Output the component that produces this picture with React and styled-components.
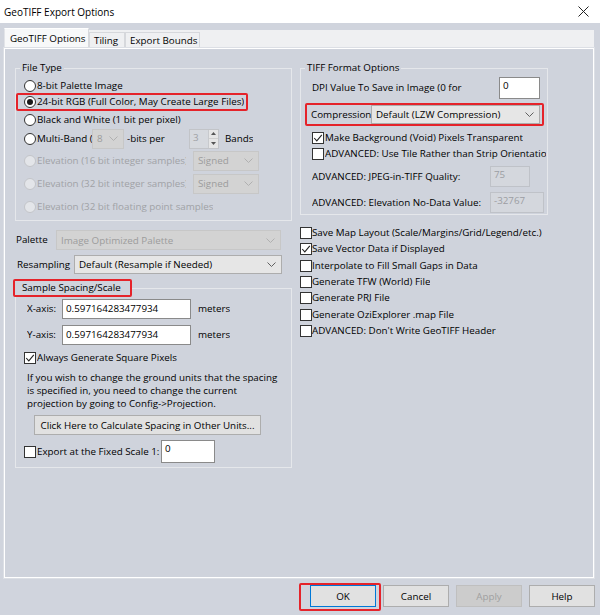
import React from 'react';
import styled, { createGlobalStyle, css } from 'styled-components';

const Global = createGlobalStyle`
  html, body { margin: 0; padding: 0; background: #d0d4dd; }
  body { font-family: "Open Sans", "Noto Sans", sans-serif; font-size: 9.8px; color: #000; }
  * { box-sizing: border-box; }
`;

const RED = '#e5232a';

const Window = styled.div`
  width: 600px;
  height: 615px;
  display: flex;
  flex-direction: column;
  background: #d0d4dd;
  overflow: hidden;
`;

const TitleBar = styled.div`
  height: 23px;
  flex-shrink: 0;
  background: #fff;
  display: flex;
  align-items: center;
  justify-content: space-between;
  padding: 0 11px 0 4px;
`;

const Title = styled.span`
  font-size: 10px;
  line-height: 14px;
`;

const Body = styled.div`
  flex: 1;
  display: flex;
  flex-direction: column;
  padding: 7px 6px 0 4px;
`;

const TabStrip = styled.div`
  height: 18px;
  flex-shrink: 0;
  background: #eff0f2;
  display: flex;
  align-items: flex-end;
`;

const Tab = styled.div`
  height: ${p => (p.$active ? 20 : 16)}px;
  width: ${p => p.$w}px;
  padding: 0 0 0 ${p => (p.$active ? 5 : 4)}px;
  display: flex;
  align-items: center;
  white-space: nowrap;
  background: ${p => (p.$active ? '#f7f8f9' : '#eff0f2')};
  border: 1px solid ${p => (p.$active ? '#ffffff' : '#d6d8dc')};
  border-bottom: none;
  ${p => p.$active && css`border-left-color: #e2e4e8; border-right-color: #d6d8dc;`}
`;

const Panel = styled.div`
  height: 530px;
  flex-shrink: 0;
  background: #cfd3dc;
  border: 1px solid #ffffff;
  box-shadow: 0 0 0 1px #dcdfe5;
  display: flex;
  gap: 8px;
  padding: 12px 0 0 10px;
`;

const Column = styled.div`
  width: ${p => p.$w}px;
  display: flex;
  flex-direction: column;
  flex-shrink: 0;
`;

const Group = styled.fieldset`
  margin: ${p => p.$mt || 0}px 0 0 0;
  min-width: 0;
  border: 1px solid #e5e7eb;
  padding: ${p => p.$pad};
`;

const Legend = styled.legend`
  margin-left: ${p => p.$ml}px;
  padding: 0 2px;
  line-height: 14px;
  white-space: nowrap;
  ${p => p.$mark && css`
    border: 2px solid ${RED};
    border-radius: 2px;
    padding: 0 9px 0 7px;
  `}
`;

const Stack = styled.div`
  display: flex;
  flex-direction: column;
`;

const Row = styled.div`
  display: flex;
  align-items: center;
  flex-shrink: 0;
  height: ${p => p.$h}px;
  margin-top: ${p => p.$mt || 0}px;
  margin-left: ${p => p.$ml || 0}px;
  margin-right: ${p => p.$mr || 0}px;
  justify-content: ${p => p.$between ? 'space-between' : 'flex-start'};
`;

const Mark = styled.div`
  display: flex;
  align-items: center;
  align-self: flex-start;
  flex-shrink: 0;
  border: 2px solid ${RED};
  border-radius: 2px;
  height: ${p => p.$h}px;
  margin-top: ${p => p.$mt || 0}px;
  margin-left: ${p => p.$ml}px;
  margin-right: ${p => p.$mr || 0}px;
  padding: 0 ${p => p.$pr || 2}px 0 ${p => p.$pl}px;
`;

const Label = styled.span`
  white-space: nowrap;
  overflow: hidden;
  line-height: 14px;
  flex-shrink: 0;
  color: ${p => (p.$disabled ? '#a0a2a6' : '#000')};
  ${p => p.$w && css`width: ${p.$w}px;`}
  margin-left: ${p => p.$ml || 0}px;
`;

const RadioCircle = styled.span`
  width: 12px;
  height: 12px;
  border-radius: 50%;
  flex-shrink: 0;
  margin-right: 1px;
  border: 1px solid ${p => (p.$disabled ? '#c3c5c9' : '#333')};
  background: ${p => (p.$disabled ? '#e3e5e9' : '#fff')};
  display: inline-flex;
  align-items: center;
  justify-content: center;
  &::after {
    content: '';
    width: 6px;
    height: 6px;
    border-radius: 50%;
    background: #1a1a1a;
    display: ${p => (p.$checked ? 'block' : 'none')};
  }
`;

const CheckBox = styled.span`
  width: 12px;
  height: 12px;
  flex-shrink: 0;
  margin-right: ${p => p.$gap ?? 1}px;
  border: 1px solid #333;
  background: #fff;
  display: inline-flex;
  align-items: center;
  justify-content: center;
`;

const Select = styled.div`
  width: ${p => p.$w}px;
  height: ${p => p.$h || 20}px;
  flex-shrink: 0;
  margin-left: ${p => p.$ml || 0}px;
  display: flex;
  align-items: center;
  justify-content: space-between;
  padding: 0 5px 0 4px;
  white-space: nowrap;
  background: ${p => (p.$disabled ? '#d3d3d3' : '#e6e6e6')};
  border: 1px solid ${p => (p.$disabled ? '#c7c7c7' : '#adadad')};
  color: ${p => (p.$disabled ? '#9c9c9c' : '#000')};
`;

const Field = styled.div`
  width: ${p => p.$w}px;
  height: ${p => p.$h || 20}px;
  flex-shrink: 0;
  margin-left: ${p => p.$ml || 0}px;
  display: flex;
  align-items: ${p => (p.$top ? 'flex-start' : 'center')};
  padding: ${p => (p.$top ? '1px 3px 0 3px' : '0 3px')};
  line-height: 14px;
  white-space: nowrap;
  background: ${p => (p.$disabled ? '#d4d7dd' : '#fff')};
  border: 1px solid ${p => (p.$disabled ? '#bfc2c8' : '#8a8a8a')};
  color: ${p => (p.$disabled ? '#9c9ea3' : '#000')};
`;

const Spin = styled.div`
  width: 30px;
  height: 20px;
  margin-left: ${p => p.$ml}px;
  flex-shrink: 0;
  display: flex;
  border: 1px solid #c2c4c8;
  background: #d6d9de;
`;

const SpinText = styled.div`
  flex: 1;
  padding: 1px 0 0 3px;
  line-height: 14px;
  color: #a0a2a6;
`;

const SpinArrows = styled.div`
  width: 10px;
  display: flex;
  flex-direction: column;
  border-left: 1px solid #c8cacd;
  background: #e6e6e6;
`;

const SpinArrow = styled.div`
  flex: 1;
  display: flex;
  align-items: center;
  justify-content: center;
  & + & { border-top: 1px solid #cfcfcf; }
`;

const Note = styled.p`
  margin: 6px 0 0 3px;
  line-height: 13px;
  white-space: nowrap;
`;

const WideButton = styled.button`
  font: inherit;
  color: #000;
  width: 227px;
  height: 20px;
  margin: 5px 0 0 10px;
  padding: 0;
  background: #e1e1e1;
  border: 1px solid #adadad;
  flex-shrink: 0;
`;

const CheckList = styled.div`
  display: flex;
  flex-direction: column;
  margin-top: 10px;
`;

const CheckItem = styled.div`
  height: 16.33px;
  display: flex;
  align-items: center;
  white-space: nowrap;
`;

const Footer = styled.div`
  display: flex;
  justify-content: flex-end;
  align-items: flex-start;
  gap: 7px;
  padding: 7px 0 0 0;
  margin-right: -1px;
`;

const DefaultMark = styled.div`
  display: flex;
  margin: -2px -5px 0 0;
  padding: 0 3px 2px 9px;
  border: 2px solid ${RED};
  border-radius: 2px;
`;

const PushButton = styled.button`
  font: inherit;
  width: 66px;
  height: 22px;
  padding: 0;
  background: #e1e1e1;
  border: 1px solid #adadad;
  color: #000;
  ${p => p.$default && css`border-color: #0078d7;`}
  ${p => p.$disabled && css`
    background: #cccccc;
    border-color: #bfbfbf;
    color: #a0a0a0;
  `}
`;

const Chevron = ({ disabled }) => (
  <svg width="9" height="5" viewBox="0 0 9 5">
    <polyline points="0.5,0.5 4.5,4.5 8.5,0.5" fill="none" stroke={disabled ? '#b0b0b0' : '#606060'} strokeWidth="1" />
  </svg>
);

const Tick = () => (
  <svg width="10" height="10" viewBox="0 0 10 10">
    <polyline points="1.2,5 3.8,7.8 8.8,1.8" fill="none" stroke="#222" strokeWidth="1.1" />
  </svg>
);

const Close = () => (
  <svg width="11" height="11" viewBox="0 0 11 11">
    <path d="M0.5 0.5 L10.5 10.5 M10.5 0.5 L0.5 10.5" stroke="#222" strokeWidth="1" />
  </svg>
);

const Radio = ({ checked, disabled, children, w }) => (
  <>
    <RadioCircle $checked={checked} $disabled={disabled} />
    <Label $disabled={disabled} $w={w}>{children}</Label>
  </>
);

const Check = ({ checked, children, gap, w }) => (
  <>
    <CheckBox $gap={gap}>{checked && <Tick />}</CheckBox>
    <Label $w={w}>{children}</Label>
  </>
);

const rightChecks = [
  ['Save Map Layout (Scale/Margins/Grid/Legend/etc.)', false],
  ['Save Vector Data if Displayed', true],
  ['Interpolate to Fill Small Gaps in Data', false],
  ['Generate TFW (World) File', false],
  ['Generate PRJ File', false],
  ['Generate OziExplorer .map File', false],
  ["ADVANCED: Don't Write GeoTIFF Header", false],
];

export default function App() {
  return (
    <>
      <Global />
      <Window>
        <TitleBar>
          <Title>GeoTIFF Export Options</Title>
          <Close />
        </TitleBar>
        <Body>
          <TabStrip>
            <Tab $active $w={85}>GeoTIFF Options</Tab>
            <Tab $w={36}>Tiling</Tab>
            <Tab $w={75}>Export Bounds</Tab>
          </TabStrip>
          <Panel>
            <Column $w={277}>
              <Group $pad="3px 0 2px 8px">
                <Legend $ml={-4}>File Type</Legend>
                <Stack>
                  <Row $h={15}><Radio>8-bit Palette Image</Radio></Row>
                  <Mark $h={18} $ml={-8} $pl={6}>
                    <Radio checked>24-bit RGB (Full Color, May Create Large Files)</Radio>
                  </Mark>
                  <Row $h={17}><Radio>Black and White (1 bit per pixel)</Radio></Row>
                  <Row $h={21}>
                    <Radio w={55}>Multi-Band (</Radio>
                    <Select $w={32} $disabled>8<Chevron disabled /></Select>
                    <Label $ml={3} $w={62}>-bits per</Label>
                    <Spin $ml={0}>
                      <SpinText>3</SpinText>
                      <SpinArrows>
                        <SpinArrow>
                          <svg width="5" height="3" viewBox="0 0 5 3"><polygon points="0,3 2.5,0 5,3" fill="#555" /></svg>
                        </SpinArrow>
                        <SpinArrow>
                          <svg width="5" height="3" viewBox="0 0 5 3"><polygon points="0,0 2.5,3 5,0" fill="#555" /></svg>
                        </SpinArrow>
                      </SpinArrows>
                    </Spin>
                    <Label $ml={6}>Bands</Label>
                  </Row>
                  <Row $h={23}>
                    <Radio disabled w={149}>Elevation (16 bit integer samples)</Radio>
                    <Select $w={66} $ml={7} $disabled>Signed<Chevron disabled /></Select>
                  </Row>
                  <Row $h={23}>
                    <Radio disabled w={149}>Elevation (32 bit integer samples)</Radio>
                    <Select $w={66} $ml={7} $disabled>Signed<Chevron disabled /></Select>
                  </Row>
                  <Row $h={23}>
                    <Radio disabled>Elevation (32 bit floating point samples</Radio>
                  </Row>
                </Stack>
              </Group>

              <Row $h={20} $mt={9} $ml={1}>
                <Label $w={40}>Palette</Label>
                <Select $w={225} $disabled>Image Optimized Palette<Chevron disabled /></Select>
              </Row>
              <Row $h={19} $mt={5} $ml={2}>
                <Label $w={57}>Resampling</Label>
                <Select $w={208} $h={19}>Default (Resample if Needed)<Chevron /></Select>
              </Row>

              <Group $mt={5} $pad="2px 0 4px 8px">
                <Legend $ml={-11} $mark>Sample Spacing/Scale</Legend>
                <Stack>
                  <Row $h={20} $ml={3}>
                    <Label $w={35}>X-axis:</Label>
                    <Field $w={129}>0.597164283477934</Field>
                    <Label $ml={7}>meters</Label>
                  </Row>
                  <Row $h={20} $mt={6} $ml={3}>
                    <Label $w={35}>Y-axis:</Label>
                    <Field $w={129}>0.597164283477934</Field>
                    <Label $ml={7}>meters</Label>
                  </Row>
                  <Row $h={14} $mt={6}>
                    <Check checked>Always Generate Square Pixels</Check>
                  </Row>
                  <Note>
                    If you wish to change the ground units that the spacing<br />
                    is specified in, you need to change the current<br />
                    projection by going to Config-&gt;Projection.
                  </Note>
                  <WideButton>Click Here to Calculate Spacing in Other Units...</WideButton>
                  <Row $h={23} $mt={5}>
                    <Check w={124}>Export at the Fixed Scale 1:</Check>
                    <Field $w={54} $h={23} $top>0</Field>
                  </Row>
                </Stack>
              </Group>
            </Column>

            <Column $w={248}>
              <Group $pad="2px 7px 1px 11px">
                <Legend $ml={-7}>TIFF Format Options</Legend>
                <Stack>
                  <Row $h={22} $between>
                    <Label>DPI Value To Save in Image (0 for</Label>
                    <Field $w={41} $h={22} $top>0</Field>
                  </Row>
                  <Mark $h={23} $mt={4} $ml={-7} $mr={-4} $pl={4} $pr={2}>
                    <Label $w={60}>Compression</Label>
                    <Select $w={169} $h={19}>Default (LZW Compression)<Chevron /></Select>
                  </Mark>
                  <Row $h={14} $mt={5}>
                    <Check checked gap={1}>Make Background (Void) Pixels Transparent</Check>
                  </Row>
                  <Row $h={14} $mt={2} $mr={-6}>
                    <Check gap={1} w={221}>ADVANCED: Use Tile Rather than Strip Orientation</Check>
                  </Row>
                  <Row $h={21} $mt={5}>
                    <Label $w={178}>ADVANCED: JPEG-in-TIFF Quality:</Label>
                    <Field $w={40} $h={21} $top $disabled>75</Field>
                  </Row>
                  <Row $h={21} $mt={5} $mr={-4}>
                    <Label $w={178}>ADVANCED: Elevation No-Data Value:</Label>
                    <Field $w={54} $h={21} $top $disabled>-32767</Field>
                  </Row>
                </Stack>
              </Group>
              <CheckList>
                {rightChecks.map(([text, on]) => (
                  <CheckItem key={text}>
                    <Check checked={on} gap={0}>{text}</Check>
                  </CheckItem>
                ))}
              </CheckList>
            </Column>
          </Panel>
          <Footer>
            <DefaultMark>
              <PushButton $default>OK</PushButton>
            </DefaultMark>
            <PushButton>Cancel</PushButton>
            <PushButton $disabled>Apply</PushButton>
            <PushButton>Help</PushButton>
          </Footer>
        </Body>
      </Window>
    </>
  );
}
